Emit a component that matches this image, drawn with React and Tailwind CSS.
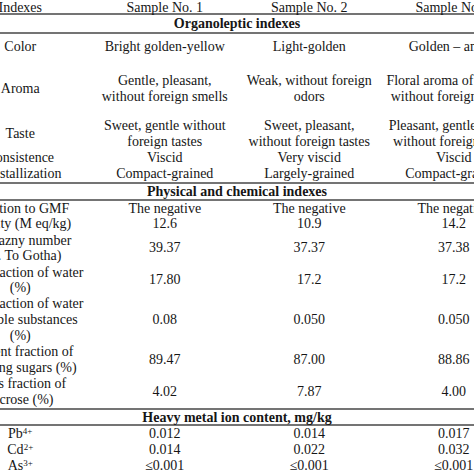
import React from "react";

const cols = "grid grid-cols-[144.5px_144.5px_144.5px_144.5px] items-center";

function Sup({ base, sup }) {
  return (
    <span>
      {base}
      <sup className="text-[9px] leading-none">{sup}</sup>
    </span>
  );
}

const organoleptic = [
  {
    h: "h-[26px]",
    cells: [["Color"], ["Bright golden-yellow"], ["Light-golden"], ["Golden – amber"]],
  },
  {
    h: "h-[57px]",
    cells: [
      ["Aroma"],
      ["Gentle, pleasant,", "without foreign smells"],
      ["Weak, without foreign", "odors"],
      ["Floral aroma of heather,", "without foreign smells"],
    ],
  },
  {
    h: "h-[33px]",
    cells: [
      ["Taste"],
      ["Sweet, gentle without", "foreign tastes"],
      ["Sweet, pleasant,", "without foreign tastes"],
      ["Pleasant, gentle, sweet,", "without foreign tastes"],
    ],
  },
  { h: "h-[16px]", cells: [["Consistence"], ["Viscid"], ["Very viscid"], ["Viscid"]] },
  {
    h: "h-[16px]",
    cells: [["Crystallization"], ["Compact-grained"], ["Largely-grained"], ["Compact-grained"]],
  },
];

const physical = [
  {
    h: "h-[14px]",
    cells: [["Reaction to GMF"], ["The negative"], ["The negative"], ["The negative"]],
  },
  { h: "h-[17px]", cells: [["Acidity (M eq/kg)"], ["12.6"], ["10.9"], ["14.2"]] },
  {
    h: "h-[31px]",
    lead: "leading-[15px]",
    cells: [["Diastazny number", "(un. To Gotha)"], ["39.37"], ["37.37"], ["37.38"]],
  },
  {
    h: "h-[33px]",
    lead: "leading-[15px]",
    cells: [["Mass fraction of water", "(%)"], ["17.80"], ["17.2"], ["17.2"]],
  },
  {
    h: "h-[48px]",
    cells: [
      ["Mass fraction of water", "insoluble substances", "(%)"],
      ["0.08"],
      ["0.050"],
      ["0.050"],
    ],
  },
  {
    h: "h-[32px]",
    cells: [["Content fraction of", "reducing sugars (%)"], ["89.47"], ["87.00"], ["88.86"]],
  },
  {
    h: "h-[32px]",
    cells: [["Mass fraction of", "sucrose (%)"], ["4.02"], ["7.87"], ["4.00"]],
  },
];

const metals = [
  { h: "h-[16px]", cells: [[<Sup base="Pb" sup="4+" />], ["0.012"], ["0.014"], ["0.017"]] },
  { h: "h-[16px]", cells: [[<Sup base="Cd" sup="2+" />], ["0.014"], ["0.022"], ["0.032"]] },
  { h: "h-[16px]", cells: [[<Sup base="As" sup="3+" />], ["≤0.001"], ["≤0.001"], ["≤0.001"]] },
];

function Rule() {
  return <div className="h-[2px] bg-[#747474]"></div>;
}

function Section({ title, h }) {
  return <div className={`${h} flex items-center justify-center font-bold`}>{title}</div>;
}

function Rows({ rows }) {
  return rows.map((row, i) => (
    <div key={i} className={`${cols} ${row.h}`}>
      {row.cells.map((lines, j) => (
        <div
          key={j}
          className={`flex flex-col items-center whitespace-nowrap ${row.lead || "leading-[16px]"}`}
        >
          {lines.map((line, k) => (
            <span key={k}>{line}</span>
          ))}
        </div>
      ))}
    </div>
  ));
}

export default function App() {
  return (
    <div className="w-[474px] h-[474px] overflow-hidden bg-white text-[#161616] text-[14px] font-['Liberation_Serif','Times_New_Roman',serif]">
      <div className="w-[578px] ml-[-52px]">
        <div className={`${cols} h-[13px] leading-[16px]`}>
          <div className="text-center">Indexes</div>
          <div className="text-center">Sample No. 1</div>
          <div className="text-center">Sample No. 2</div>
          <div className="text-center">Sample No. 3</div>
        </div>
        <Rule />
        <Section title="Organoleptic indexes" h="h-[17px]" />
        <Rule />
        <Rows rows={organoleptic} />
        <Rule />
        <Section title="Physical and chemical indexes" h="h-[15px]" />
        <Rule />
        <Rows rows={physical} />
        <Rule />
        <Section title="Heavy metal ion content, mg/kg" h="h-[14px]" />
        <Rule />
        <Rows rows={metals} />
      </div>
    </div>
  );
}
